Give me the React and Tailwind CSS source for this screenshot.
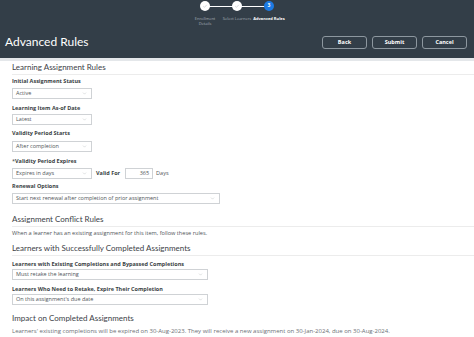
import { ChevronDown } from "lucide-react";

const font = { fontFamily: "'Open Sans', 'Noto Sans', sans-serif" };
const lato = { fontFamily: "Lato, 'Open Sans', sans-serif" };

function Step({ label, state, num }) {
  return (
    <div className="flex w-[32px] flex-col items-center">
      {state === "done" ? (
        <div className="relative z-10 flex h-[10px] w-[10px] items-center justify-center rounded-full bg-white">
          <svg viewBox="0 0 10 10" className="h-[6px] w-[6px]">
            <path d="M2 5.2 L4.2 7.2 L8 3" fill="none" stroke="#c9cdd1" strokeWidth="1.2" />
          </svg>
        </div>
      ) : (
        <div className="relative z-10 flex h-[10px] w-[10px] items-center justify-center rounded-full bg-[#1c7ae3] text-[5px] font-bold text-white">
          {num}
        </div>
      )}
      <div
        className={`mt-[5px] text-center text-[4px] leading-[5px] ${
          state === "done" ? "text-[#a7afb6]" : "font-bold text-white"
        } ${label === "Enrollment Details" ? "w-[24px]" : "whitespace-nowrap"}`}
      >
        {label}
      </div>
    </div>
  );
}

function HeaderButton({ children }) {
  return (
    <button className="h-[13px] w-[45px] rounded-[3px] border border-[#8d979f] text-[5.5px] font-bold leading-none text-white">
      {children}
    </button>
  );
}

function Select({ value, width = "w-[80px]" }) {
  return (
    <div className={`flex h-[11px] ${width} items-center justify-between border border-[#cfd2d5] bg-white pl-[3px] pr-[4px]`}>
      <span className="text-[5.5px] leading-none text-[#4f5559]">{value}</span>
      <ChevronDown className="h-[5px] w-[5px] text-[#9aa0a5]" strokeWidth={1.5} />
    </div>
  );
}

function Label({ children, className = "" }) {
  return <div className={`text-[5.5px] font-bold leading-[7px] text-[#3a3f44] ${className}`}>{children}</div>;
}

function Heading({ children, line = true, className = "" }) {
  return (
    <div className={`${line ? "border-b border-[#ececec]" : ""} ${className}`}>
      <div className="text-[8px] leading-[11px] text-[#3d4247]" style={lato}>{children}</div>
    </div>
  );
}

export default function App() {
  return (
    <div className="h-[337px] w-[474px] overflow-hidden bg-white" style={font}>
      <div className="flex h-[58px] flex-col bg-[#333e48]">
        <div className="flex justify-center pt-[1px]">
          <div className="relative flex">
            <div className="absolute left-[16px] right-[16px] top-[5px] h-px bg-white" />
            <Step label="Enrollment Details" state="done" />
            <Step label="Select Learners" state="done" />
            <Step label="Advanced Rules" state="current" num="3" />
          </div>
        </div>
        <div className="mt-auto flex items-end justify-between pb-[9px] pl-[5px] pr-[7px]">
          <div className="text-[12px] leading-[14px] text-white" style={lato}>Advanced Rules</div>
          <div className="flex gap-[5px]">
            <HeaderButton>Back</HeaderButton>
            <HeaderButton>Submit</HeaderButton>
            <HeaderButton>Cancel</HeaderButton>
          </div>
        </div>
      </div>
      <div className="h-[3px] bg-[#e4e7ea]" />

      <div className="pl-[12px]">
        <Heading className="pt-[1px] pb-[1px]">Learning Assignment Rules</Heading>

        <Label className="mt-[3px]">Initial Assignment Status</Label>
        <div className="mt-[3px]"><Select value="Active" /></div>

        <Label className="mt-[6px]">Learning Item As-of Date</Label>
        <div className="mt-[2px]"><Select value="Latest" /></div>

        <Label className="mt-[5px]">Validity Period Starts</Label>
        <div className="mt-[4px]"><Select value="After completion" /></div>

        <Label className="mt-[6px]"><span className="font-normal">*</span>Validity Period Expires</Label>
        <div className="mt-[3px] flex items-center">
          <Select value="Expires in days" />
          <span className="ml-[4px] text-[5.5px] font-bold text-[#3a3f44]">Valid For</span>
          <div className="ml-[5px] flex h-[11px] w-[28px] items-center justify-end border border-[#cfd2d5] pr-[3px] text-[5.5px] text-[#4f5559]">
            365
          </div>
          <span className="ml-[3px] text-[5.5px] text-[#4f5559]">Days</span>
        </div>

        <Label className="mt-[4px]">Renewal Options</Label>
        <div className="mt-[3px]">
          <Select value="Start next renewal after completion of prior assignment" width="w-[208px]" />
        </div>

        <Heading className="mt-[10px] pb-[1px]">Assignment Conflict Rules</Heading>
        <div className="mt-[3px] text-[5.6px] leading-[7px] text-[#4f5559]">
          When a learner has an existing assignment for this item, follow these rules.
        </div>

        <Heading className="mt-[6px] pb-[1px]">Learners with Successfully Completed Assignments</Heading>
        <Label className="mt-[5px]">Learners with Existing Completions and Bypassed Completions</Label>
        <div className="mt-[1px]">
          <Select value="Must retake the learning" width="w-[196px]" />
        </div>

        <Label className="mt-[6px]">Learners Who Need to Retake, Expire Their Completion</Label>
        <div className="mt-[1px]">
          <Select value="On this assignment's due date" width="w-[196px]" />
        </div>

        <Heading line={false} className="mt-[8px]">Impact on Completed Assignments</Heading>
        <div className="mt-[3px] text-[6px] leading-[8px] text-[#6b7075]">
          Learners' existing completions will be expired on 30-Aug-2023. They will receive a new assignment on 30-Jan-2024, due on 30-Aug-2024.
        </div>
      </div>
    </div>
  );
}
